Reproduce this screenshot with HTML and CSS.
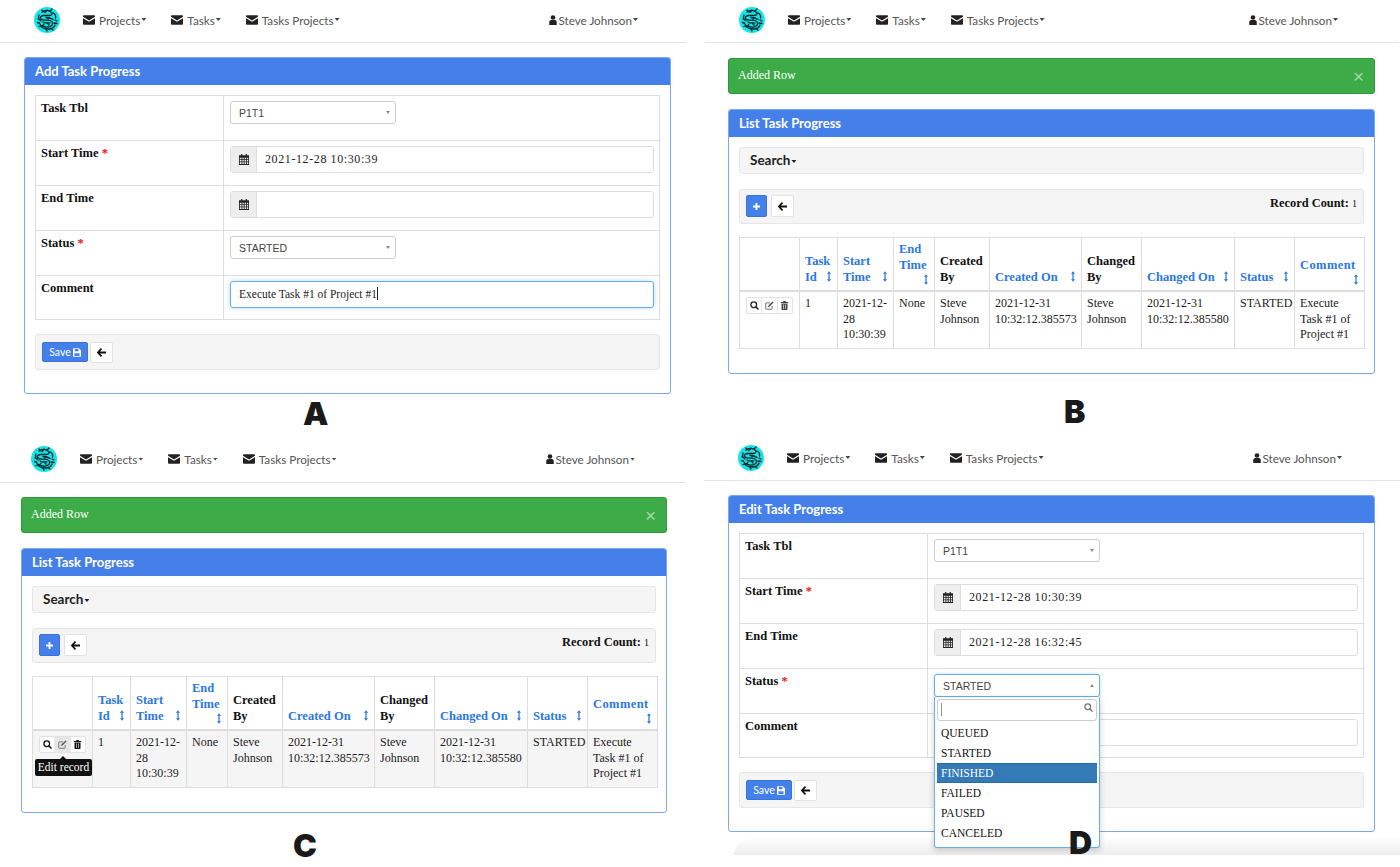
FILE: index.html
```html
<!DOCTYPE html>
<html lang="en">
<head>
<meta charset="utf-8">
<title>Task Progress</title>
<link rel="stylesheet" href="styles.css">
</head>
<body>
<svg class="sprite" aria-hidden="true">
  <symbol id="i-mail" viewBox="0 0 14 11"><path d="M1 0h12a1 1 0 0 1 1 1v.8L7 6 0 1.800V1a1 1 0 0 1 1-1z"/><path d="M0 3.400 7 7.600l7-4.200V10a1 1 0 0 1-1 1H1a1 1 0 0 1-1-1z"/></symbol>
  <symbol id="i-user" viewBox="0 0 9 12"><circle cx="4.500" cy="3" r="2.800"/><path d="M0 12V8.500C0 6.800 1.200 6 2.400 6h4.200C7.800 6 9 6.800 9 8.500V12z"/></symbol>
  <symbol id="i-cal" viewBox="0 0 12 13"><path d="M2.500 0h1.500v2H2.500zM8 0h1.500v2H8z"/><path fill-rule="evenodd" d="M0 1.500h12V13H0zM1 4.500v1.700h2V4.500zm3 0v1.700h1.700V4.500zm2.700 0v1.700h1.700V4.500zm2.700 0v1.700H11V4.500zM1 7.200v1.700h2V7.200zm3 0v1.700h1.700V7.200zm2.700 0v1.700h1.700V7.200zm2.700 0v1.700H11V7.200zM1 9.900v1.900h2V9.900zm3 0v1.900h1.700V9.900zm2.700 0v1.900h1.700V9.900zm2.700 0v1.900H11V9.900z"/></symbol>
  <symbol id="i-back" viewBox="0 0 10 10"><path d="M5 .8 1 5l4 4.200M1.300 5H10" fill="none" stroke="currentColor" stroke-width="2"/></symbol>
  <symbol id="i-plus" viewBox="0 0 10 10"><path d="M5 0v10M0 5h10" fill="none" stroke="currentColor" stroke-width="2.600"/></symbol>
  <symbol id="i-search" viewBox="0 0 12 12"><circle cx="5" cy="5" r="3.800" fill="none" stroke="currentColor" stroke-width="1.700"/><path d="m7.800 7.800 3.500 3.500" fill="none" stroke="currentColor" stroke-width="2"/></symbol>
  <symbol id="i-edit" viewBox="0 0 12 12"><path d="M9.500 6.800V10a1 1 0 0 1-1 1H2a1 1 0 0 1-1-1V3.500a1 1 0 0 1 1-1h4.500" fill="none" stroke="currentColor"/><path d="M10 .6 11.400 2 6 7.400l-2 .6.600-2z"/></symbol>
  <symbol id="i-trash" viewBox="0 0 10 12"><path d="M3.500 0h3l.5 1.200h3v1.300H0V1.200h3z"/><path fill-rule="evenodd" d="M1 3.200h8V11a1 1 0 0 1-1 1H2a1 1 0 0 1-1-1zM3 4.500V10.500h.8V4.500zm3.200 0V10.500H7V4.500z"/></symbol>
  <symbol id="i-save" viewBox="0 0 11 12"><path fill-rule="evenodd" d="M1 0h7l3 3v8a1 1 0 0 1-1 1H1a1 1 0 0 1-1-1V1a1 1 0 0 1 1-1zM2.500 1.200v3h5v-3zM2 7v3.800h7V7z"/></symbol>
  <symbol id="i-sort" viewBox="0 0 5 13"><path d="M2.500 0 5 3H3.300v7H5l-2.500 3L0 10h1.700V3H0z"/></symbol>
  <symbol id="i-logo" viewBox="0 0 26 26"><circle cx="13" cy="13" r="13" fill="#14e4e6"/><path d="M8 5c3-2.500 7-2 9 0 2 1.500 1 3.500-2 3.500H10C7 8.500 5.500 10.500 7 12c2 2 6 .5 9 1.500 3 1 3.500 4 1 5.500-2.500 1.500-6 1-8 0M5 8c-1 3 0 5 2 6M19 6c2 1 3 3 2.500 5M6 17c1 3 4 5 8 5 3 0 6-1 7-4M11 5.500l2-2.500M16 4l2-2M9 15c2 1.500 5 1 7 .8M12 10.500c2 0 5 .5 7 2M5 19.500l3-1M12 22.500l1 1.500M17 21.500l2 1.500M4 12l2 1M21 13l2 1M8 3l1 2M20 16l3 .5M3.500 15.500l2 .5M14 12l1-1.500M10 17l-1 1.500M14 17l1 1" fill="none" stroke="#0b2226" stroke-width="1.300" stroke-linecap="round"/></symbol>
</svg>

<div class="collage">

  <section class="shot shot-a">
    <nav class="nav">
      <svg class="logo"><use href="#i-logo"/></svg>
      <a class="nav-item"><svg class="ic-mail"><use href="#i-mail"/></svg>Projects<i class="caret"></i></a>
      <a class="nav-item"><svg class="ic-mail"><use href="#i-mail"/></svg>Tasks<i class="caret"></i></a>
      <a class="nav-item"><svg class="ic-mail"><use href="#i-mail"/></svg>Tasks Projects<i class="caret"></i></a>
      <a class="nav-item nav-user"><svg class="ic-user"><use href="#i-user"/></svg>Steve Johnson<i class="caret"></i></a>
    </nav>
    <main class="main">
      <div class="panel panel-form">
        <h2 class="panel-head">Add Task Progress</h2>
        <div class="panel-body">
          <table class="form-table">
            <tr><th>Task Tbl</th><td><div class="select">P1T1<i class="select-arrow"></i></div></td></tr>
            <tr><th>Start Time <b class="req">*</b></th><td><div class="input-group"><span class="addon"><svg class="ic-cal"><use href="#i-cal"/></svg></span><span class="input">2021-12-28 10:30:39</span></div></td></tr>
            <tr><th>End Time</th><td><div class="input-group"><span class="addon"><svg class="ic-cal"><use href="#i-cal"/></svg></span><span class="input"></span></div></td></tr>
            <tr><th>Status <b class="req">*</b></th><td><div class="select">STARTED<i class="select-arrow"></i></div></td></tr>
            <tr><th>Comment</th><td><div class="text-focus">Execute Task #1 of Project #1<i class="cursor"></i></div></td></tr>
          </table>
          <div class="well well-form">
            <button class="btn btn-primary btn-save">Save<svg class="ic-save"><use href="#i-save"/></svg></button>
            <button class="btn btn-back"><svg class="ic-back"><use href="#i-back"/></svg></button>
          </div>
        </div>
      </div>
    </main>
    <span class="letter">A</span>
  </section>

  <section class="shot shot-b">
    <nav class="nav">
      <svg class="logo"><use href="#i-logo"/></svg>
      <a class="nav-item"><svg class="ic-mail"><use href="#i-mail"/></svg>Projects<i class="caret"></i></a>
      <a class="nav-item"><svg class="ic-mail"><use href="#i-mail"/></svg>Tasks<i class="caret"></i></a>
      <a class="nav-item"><svg class="ic-mail"><use href="#i-mail"/></svg>Tasks Projects<i class="caret"></i></a>
      <a class="nav-item nav-user"><svg class="ic-user"><use href="#i-user"/></svg>Steve Johnson<i class="caret"></i></a>
    </nav>
    <main class="main">
      <div class="alert">Added Row<span class="alert-close">×</span></div>
      <div class="panel panel-list">
        <h2 class="panel-head">List Task Progress</h2>
        <div class="panel-body">
          <div class="search-bar">Search<i class="caret caret-dark"></i></div>
          <div class="well well-list">
            <button class="btn btn-primary btn-add"><svg class="ic-plus"><use href="#i-plus"/></svg></button>
            <button class="btn btn-back"><svg class="ic-back"><use href="#i-back"/></svg></button>
            <span class="record-count"><b>Record Count:</b> <small>1</small></span>
          </div>
          <table class="list-table">
            <colgroup><col class="c1"><col class="c2"><col class="c3"><col class="c4"><col class="c5"><col class="c6"><col class="c7"><col class="c8"><col class="c9"><col class="c10"></colgroup>
            <thead><tr>
              <th></th>
              <th class="sortable">Task Id<svg class="ic-sort"><use href="#i-sort"/></svg></th>
              <th class="sortable">Start Time<svg class="ic-sort"><use href="#i-sort"/></svg></th>
              <th class="sortable">End Time<svg class="ic-sort"><use href="#i-sort"/></svg></th>
              <th>Created By</th>
              <th class="sortable">Created On<svg class="ic-sort"><use href="#i-sort"/></svg></th>
              <th>Changed By</th>
              <th class="sortable">Changed On<svg class="ic-sort"><use href="#i-sort"/></svg></th>
              <th class="sortable">Status<svg class="ic-sort"><use href="#i-sort"/></svg></th>
              <th class="sortable th-comment">Comment<svg class="ic-sort ic-sort-own"><use href="#i-sort"/></svg></th>
            </tr></thead>
            <tbody><tr>
              <td><div class="actions"><span class="act"><svg class="ic-act"><use href="#i-search"/></svg></span><span class="act act-muted"><svg class="ic-act"><use href="#i-edit"/></svg></span><span class="act act-muted"><svg class="ic-act"><use href="#i-trash"/></svg></span></div></td>
              <td>1</td>
              <td>2021-12-28 10:30:39</td>
              <td>None</td>
              <td>Steve Johnson</td>
              <td>2021-12-31 10:32:12.385573</td>
              <td>Steve Johnson</td>
              <td>2021-12-31 10:32:12.385580</td>
              <td>STARTED</td>
              <td>Execute Task #1 of Project #1</td>
            </tr></tbody>
          </table>
        </div>
      </div>
    </main>
    <span class="letter">B</span>
  </section>

  <section class="shot shot-c">
    <nav class="nav">
      <svg class="logo"><use href="#i-logo"/></svg>
      <a class="nav-item"><svg class="ic-mail"><use href="#i-mail"/></svg>Projects<i class="caret"></i></a>
      <a class="nav-item"><svg class="ic-mail"><use href="#i-mail"/></svg>Tasks<i class="caret"></i></a>
      <a class="nav-item"><svg class="ic-mail"><use href="#i-mail"/></svg>Tasks Projects<i class="caret"></i></a>
      <a class="nav-item nav-user"><svg class="ic-user"><use href="#i-user"/></svg>Steve Johnson<i class="caret"></i></a>
    </nav>
    <main class="main">
      <div class="alert">Added Row<span class="alert-close">×</span></div>
      <div class="panel panel-list">
        <h2 class="panel-head">List Task Progress</h2>
        <div class="panel-body">
          <div class="search-bar">Search<i class="caret caret-dark"></i></div>
          <div class="well well-list">
            <button class="btn btn-primary btn-add"><svg class="ic-plus"><use href="#i-plus"/></svg></button>
            <button class="btn btn-back"><svg class="ic-back"><use href="#i-back"/></svg></button>
            <span class="record-count"><b>Record Count:</b> <small>1</small></span>
          </div>
          <table class="list-table list-table-hover">
            <colgroup><col class="c1"><col class="c2"><col class="c3"><col class="c4"><col class="c5"><col class="c6"><col class="c7"><col class="c8"><col class="c9"><col class="c10"></colgroup>
            <thead><tr>
              <th></th>
              <th class="sortable">Task Id<svg class="ic-sort"><use href="#i-sort"/></svg></th>
              <th class="sortable">Start Time<svg class="ic-sort"><use href="#i-sort"/></svg></th>
              <th class="sortable">End Time<svg class="ic-sort"><use href="#i-sort"/></svg></th>
              <th>Created By</th>
              <th class="sortable">Created On<svg class="ic-sort"><use href="#i-sort"/></svg></th>
              <th>Changed By</th>
              <th class="sortable">Changed On<svg class="ic-sort"><use href="#i-sort"/></svg></th>
              <th class="sortable">Status<svg class="ic-sort"><use href="#i-sort"/></svg></th>
              <th class="sortable th-comment">Comment<svg class="ic-sort ic-sort-own"><use href="#i-sort"/></svg></th>
            </tr></thead>
            <tbody><tr>
              <td class="actions-cell"><div class="actions"><span class="act act-black"><svg class="ic-act"><use href="#i-search"/></svg></span><span class="act act-hover"><svg class="ic-act"><use href="#i-edit"/></svg></span><span class="act act-black"><svg class="ic-act"><use href="#i-trash"/></svg></span></div><span class="tooltip">Edit record</span></td>
              <td>1</td>
              <td>2021-12-28 10:30:39</td>
              <td>None</td>
              <td>Steve Johnson</td>
              <td>2021-12-31 10:32:12.385573</td>
              <td>Steve Johnson</td>
              <td>2021-12-31 10:32:12.385580</td>
              <td>STARTED</td>
              <td>Execute Task #1 of Project #1</td>
            </tr></tbody>
          </table>
        </div>
      </div>
    </main>
    <span class="letter">C</span>
  </section>

  <section class="shot shot-d">
    <nav class="nav">
      <svg class="logo"><use href="#i-logo"/></svg>
      <a class="nav-item"><svg class="ic-mail"><use href="#i-mail"/></svg>Projects<i class="caret"></i></a>
      <a class="nav-item"><svg class="ic-mail"><use href="#i-mail"/></svg>Tasks<i class="caret"></i></a>
      <a class="nav-item"><svg class="ic-mail"><use href="#i-mail"/></svg>Tasks Projects<i class="caret"></i></a>
      <a class="nav-item nav-user"><svg class="ic-user"><use href="#i-user"/></svg>Steve Johnson<i class="caret"></i></a>
    </nav>
    <main class="main">
      <div class="panel panel-form">
        <h2 class="panel-head">Edit Task Progress</h2>
        <div class="panel-body">
          <table class="form-table">
            <tr><th>Task Tbl</th><td><div class="select">P1T1<i class="select-arrow"></i></div></td></tr>
            <tr><th>Start Time <b class="req">*</b></th><td><div class="input-group"><span class="addon"><svg class="ic-cal"><use href="#i-cal"/></svg></span><span class="input">2021-12-28 10:30:39</span></div></td></tr>
            <tr><th>End Time</th><td><div class="input-group"><span class="addon"><svg class="ic-cal"><use href="#i-cal"/></svg></span><span class="input">2021-12-28 16:32:45</span></div></td></tr>
            <tr><th>Status <b class="req">*</b></th><td class="status-cell">
              <div class="select select-open">STARTED<i class="select-arrow select-arrow-up"></i></div>
              <div class="dropdown">
                <div class="dropdown-search"><i class="cursor cursor-grey"></i><svg class="ic-dd-search"><use href="#i-search"/></svg></div>
                <ul class="dropdown-list">
                  <li>QUEUED</li><li>STARTED</li><li class="is-active">FINISHED</li><li>FAILED</li><li>PAUSED</li><li>CANCELED</li>
                </ul>
              </div>
            </td></tr>
            <tr><th>Comment</th><td><div class="text-plain"></div></td></tr>
          </table>
          <div class="well well-form">
            <button class="btn btn-primary btn-save">Save<svg class="ic-save"><use href="#i-save"/></svg></button>
            <button class="btn btn-back"><svg class="ic-back"><use href="#i-back"/></svg></button>
          </div>
        </div>
      </div>
    </main>
    <div class="fade"></div>
    <span class="letter">D</span>
  </section>

</div>
</body>
</html>
```
FILE: styles.css
```css
* { box-sizing: border-box; }
html, body { margin: 0; height: 100%; background: #fff; overflow: hidden; }
body { font-family: "Liberation Serif", "Times New Roman", serif; font-size: 12.5px; color: #222; }
.sprite { display: none; }

.collage { position: relative; isolation: isolate; width: 1400px; height: 867px; overflow: hidden; }
.shot { position: absolute; --nav-left: 34px; --nav-right: 48px; --main-left: 24px; }
.shot-a { left: 0; top: 0; width: 686px; }
.shot-b { left: 705px; top: 0; width: 694px; --nav-left: 34px; --nav-right: 61px; --main-left: 23px; }
.shot-c { left: 0; top: 439px; width: 685px; --nav-left: 31px; --nav-right: 50px; --main-left: 21px; }
.shot-d { left: 704px; top: 438px; width: 696px; --nav-left: 34px; --nav-right: 58px; --main-left: 24px; }

/* navbar */
.nav { height: 43px; display: flex; align-items: center; gap: 25px; padding: 0 var(--nav-right) 3px var(--nav-left); border-bottom: 1px solid #e3e3e3; font-family: "Lato", "Liberation Sans", sans-serif; font-size: 11.7px; color: #555; }
.shot-c .nav { height: 44px; padding-top: 0; }
.logo { width: 26px; height: 26px; margin-right: -2px; flex: none; }
.nav-item { display: flex; align-items: center; white-space: nowrap; }
.nav-user { margin-left: auto; }
.ic-mail { width: 12px; height: 10px; margin-right: 4px; fill: #222; }
.ic-user { width: 8px; height: 10px; margin-right: 1px; fill: #222; }
.caret { display: inline-block; width: 5px; height: 3px; margin-left: 1px; background: #444; clip-path: polygon(0 0, 100% 0, 50% 100%); }
.caret-dark { background: #222; vertical-align: 2px; }

/* main column */
.main { padding: 14px 0 0 var(--main-left); width: 671px; }
.shot-c .main { width: 667px; padding-top: 14px; }
.shot-b .main { width: 670px; padding-top: 15px; }

.alert { height: 36px; margin-bottom: 15px; padding: 9px 9px; background: #3dab47; border: 1px solid #2c9a3a; border-radius: 3px; color: #fff; font-size: 12px; position: relative; }
.alert-close { position: absolute; right: 10px; top: 8px; font: 19px/19px "Liberation Sans", sans-serif; color: #a5d8a9; }

.panel { border: 1px solid #7ea6ef; border-radius: 3px; background: #fff; }
.panel-form { height: 337px; }
.panel-list { height: 265px; }
.panel-head { margin: 0; height: 27px; padding: 0 10px; background: #4580ea; color: #fff; font: 700 13px/27px "Lato", "Liberation Sans", sans-serif; border-radius: 2px 2px 0 0; }
.panel-body { padding: 10px; }

/* form */
.form-table { width: 100%; table-layout: fixed; border-collapse: collapse; border: 1px solid #ddd; }
.form-table tr { height: 45px; }
.form-table tr:last-child { height: 44px; }
.form-table th, .form-table td { border: 1px solid #ddd; vertical-align: top; text-align: left; }
.form-table th { width: 188px; padding: 5px 5px 0; font-size: 12.5px; line-height: 15px; color: #111; }
.form-table td { position: relative; padding: 5px 5px 0 6px; }
.req { color: #e11; }
.select { position: relative; width: 166px; height: 23px; padding: 0 8px; border: 1px solid #ccc; border-radius: 3px; font: 10.5px/22px "Liberation Sans", sans-serif; color: #444; background: #fff; }
.select-arrow { position: absolute; right: 5px; top: 9px; border: 2px solid transparent; border-top: 3px solid #888; border-bottom: 0; }
.select-arrow-up { border-top: 0; border-bottom: 3px solid #888; }
.select-open { border-color: #66afe9; box-shadow: 0 0 3px rgba(102,175,233,.5); }
.input-group { display: flex; height: 27px; border: 1px solid #ddd; border-radius: 3px; }
.addon { width: 26px; flex: none; display: flex; align-items: center; justify-content: center; background: #eee; border-right: 1px solid #ddd; }
.ic-cal { width: 10px; height: 11px; fill: #222; }
.input { flex: 1; padding: 0 8px; line-height: 25px; font-size: 12px; letter-spacing: .6px; color: #222; }
.text-focus { height: 27px; padding: 0 8px; line-height: 25px; border: 1px solid #66afe9; border-radius: 3px; box-shadow: 0 0 4px rgba(102,175,233,.5); font-size: 11.5px; color: #222; }
.text-plain { height: 27px; border: 1px solid #ddd; border-radius: 3px; }
.cursor { display: inline-block; width: 1px; height: 13px; background: #222; vertical-align: -2px; }

.well { background: #f5f5f5; border: 1px solid #e6e6e6; border-radius: 3px; }
.well-form { margin-top: 14px; height: 36px; padding: 7px 6px; display: flex; gap: 2px; }
.well-list { margin-top: 15px; height: 35px; padding: 5px 6px; display: flex; gap: 4px; position: relative; }
.btn { padding: 0; border: 1px solid #e2e2e2; border-radius: 2px; background: #fff; display: flex; align-items: center; justify-content: center; }
.btn-primary { background: #4580ea; border-color: #3a73dd; color: #fff; }
.btn-save { width: 46px; height: 20px; font: 10.5px "Lato", "Liberation Sans", sans-serif; gap: 2px; }
.btn-back { width: 23px; height: 22px; color: #111; }
.well-form .btn-back { height: 21px; }
.btn-add { width: 21px; height: 22px; }
.ic-save { width: 8px; height: 9px; fill: #fff; }
.ic-back { width: 9px; height: 9px; }
.ic-plus { width: 7px; height: 7px; }
.record-count { position: absolute; right: 6px; top: 6px; font-size: 12.5px; color: #111; }
.record-count b { font-size: 12.4px; }
.record-count small { font-size: 10px; }

.search-bar { height: 27px; padding: 0 10px; background: #f5f5f5; border: 1px solid #e6e6e6; border-radius: 3px; font: 700 13.5px/25px "Lato", "Liberation Sans", sans-serif; color: #222; }

/* list table */
.list-table { margin-top: 13px; width: 100%; table-layout: fixed; border-collapse: collapse; border: 1px solid #ddd; }
.c1 { width: 60px; } .c2 { width: 38px; } .c3 { width: 56px; } .c4 { width: 41px; } .c5 { width: 55px; }
.c6 { width: 92px; } .c7 { width: 60px; } .c8 { width: 93px; } .c9 { width: 60px; } .c10 { width: 70px; }
.list-table th, .list-table td { border: 1px solid #ddd; text-align: left; line-height: 15.5px; color: #111; }
.list-table th { vertical-align: bottom; border-bottom-width: 2px; height: 53px; padding: 4px 6px 5px 5px; font-size: 12.5px; font-weight: 700; }
.list-table td { vertical-align: top; height: 57px; padding: 4px 5px; font-size: 12px; color: #222; }
.list-table .sortable { color: #2b78e4; }
.ic-sort { float: right; width: 4px; height: 11px; margin: 1px 0 0 0; fill: #2b78e4; }
.ic-sort-own { float: none; display: block; margin-left: auto; }
.th-comment { letter-spacing: .4px; }
.list-table-hover td { background: #f5f5f5; }

.actions { display: flex; width: 47px; height: 17px; margin-left: 1px; margin-top: 1px; border: 1px solid #e2e2e2; border-radius: 2px; background: #fff; }
.act { flex: 1; display: flex; align-items: center; justify-content: center; border-left: 1px solid #e8e8e8; color: #222; }
.act:first-child { border-left: 0; }
.act-muted { color: #444; }
.act-black { color: #111; }
.act-hover { background: #e6e6e6; color: #555; }
.ic-act { width: 9px; height: 9px; fill: currentColor; }
.actions-cell { position: relative; }
.tooltip { position: absolute; left: 2px; top: 28px; width: 57px; height: 17px; background: #111; border-radius: 2px; color: #fff; font-size: 11.5px; line-height: 17px; text-align: center; white-space: nowrap; }
.tooltip::before { content: ""; position: absolute; left: 25px; top: -3px; border: 3px solid transparent; border-top: 0; border-bottom-color: #111; }

/* dropdown */
.status-cell { overflow: visible; }
.dropdown { position: absolute; left: 6px; top: 28px; width: 166px; height: 151px; z-index: 5; padding: 2px 2px; background: #fff; border: 1px solid #66afe9; border-top: 0; border-radius: 0 0 3px 3px; box-shadow: 0 2px 6px rgba(0,0,0,.2); }
.dropdown-search { position: relative; height: 22px; padding: 3px 3px; border: 1px solid #ccc; border-radius: 3px; }
.cursor-grey { background: #999; vertical-align: top; }
.ic-dd-search { position: absolute; right: 3px; top: 3px; width: 9px; height: 9px; color: #777; }
.dropdown-list { list-style: none; margin: 2px 0 0; padding: 0; }
.dropdown-list li { height: 20px; padding: 0 4px; font-size: 11.5px; line-height: 20px; color: #111; }
.dropdown-list .is-active { background: #337ab7; color: #fff; border: 1px solid #2669a8; border-width: 1px 0; line-height: 18px; }

.fade { position: absolute; left: 30px; top: 399px; width: 666px; height: 18px; background: linear-gradient(#fff, #ececec); border-top-left-radius: 24px 18px; z-index: -1; }

.letter { position: absolute; font: 900 32px/32px "Inter", "Liberation Sans", sans-serif; color: #1a1a1a; z-index: 6; }
.shot-a .letter { left: 303px; top: 398px; }
.shot-b .letter { left: 359px; top: 396px; }
.shot-c .letter { left: 293px; top: 391px; }
.shot-d .letter { left: 365px; top: 389px; }
```
